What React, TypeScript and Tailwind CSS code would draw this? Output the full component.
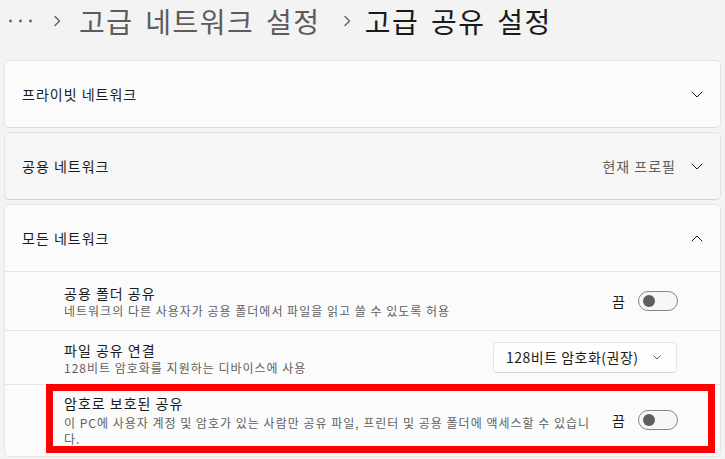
import React from "react";

const font = { fontFamily: '"Noto Sans CJK KR", "Noto Sans", sans-serif' };

function ChevronDown({ className = "" }: { className?: string }) {
  return (
    <svg width="12" height="7" viewBox="0 0 12 7" className={className} fill="none">
      <path d="M1 1l5 5 5-5" stroke="#1b1b1b" strokeWidth="1" strokeLinecap="round" strokeLinejoin="round" />
    </svg>
  );
}
function ChevronUp() {
  return (
    <svg width="12" height="7" viewBox="0 0 12 7" fill="none">
      <path d="M1 6l5-5 5 5" stroke="#1b1b1b" strokeWidth="1" strokeLinecap="round" strokeLinejoin="round" />
    </svg>
  );
}
function BreadChevron() {
  return (
    <svg width="8" height="12" viewBox="0 0 8 12" fill="none">
      <path d="M2 1.5l4.5 4.5L2 10.5" stroke="#5f5f5f" strokeWidth="1.4" strokeLinecap="round" strokeLinejoin="round" />
    </svg>
  );
}

function Toggle() {
  return (
    <div className="w-[40px] h-[20px] rounded-full border border-[#858585] bg-[#f6f6f6] flex items-center pl-[4px]">
      <div className="w-[12px] h-[12px] rounded-full bg-[#5d5d5d]" />
    </div>
  );
}

export default function App() {
  return (
    <div className="relative w-[725px] h-[459px] overflow-hidden bg-[#f3f3f3] text-[#1b1b1b]" style={font}>
      {/* Breadcrumb */}
      <div className="h-[42px] flex items-center pl-[9px]">
        <svg width="24" height="4" viewBox="0 0 24 4" className="mr-[20px]">
          <circle cx="1.5" cy="2" r="1.4" fill="#5f5f5f" />
          <circle cx="11.5" cy="2" r="1.4" fill="#5f5f5f" />
          <circle cx="21.5" cy="2" r="1.4" fill="#5f5f5f" />
        </svg>
        <BreadChevron />
        <span className="ml-[18px] text-[28px] leading-[36px] tracking-[1.5px] text-[#5c5c5c] [word-spacing:4px]">고급 네트워크 설정</span>
        <span className="ml-[22px]"><BreadChevron /></span>
        <span className="ml-[14px] text-[28px] leading-[36px] tracking-[1.5px] text-[#1a1a1a] [word-spacing:4px]">고급 공유 설정</span>
      </div>

      <div className="mt-[18px] ml-[4px] w-[717px] flex flex-col gap-[4px]">
        {/* Card 1 */}
        <div className="h-[68px] rounded-[5px] border border-[#e5e5e5] border-b-[#dcdcdc] bg-[#fbfbfb] flex items-center pl-[17px] pr-[17px]">
          <span className="text-[14px] tracking-[1px] flex-1">프라이빗 네트워크</span>
          <ChevronDown />
        </div>
        {/* Card 2 */}
        <div className="h-[68px] rounded-[5px] border border-[#e3e3e3] border-b-[#d3d3d3] bg-[#f6f6f6] flex items-center pl-[17px] pr-[17px]">
          <span className="text-[14px] tracking-[1px] flex-1">공용 네트워크</span>
          <span className="text-[14px] tracking-[1px] text-[#5f5f5f] mr-[15px]">현재 프로필</span>
          <ChevronDown />
        </div>
        {/* Card 3 */}
        <div className="rounded-[5px] border border-[#e5e5e5] bg-[#fbfbfb] flex flex-col">
          <div className="h-[66px] flex items-center pl-[17px] pr-[17px]">
            <span className="text-[14px] tracking-[1px] flex-1">모든 네트워크</span>
            <ChevronUp />
          </div>
          {/* Row 1 */}
          <div className="h-[59px] border-t border-[#e5e5e5] flex items-center pl-[59px] pr-[42px]">
            <div className="flex-1 flex flex-col">
              <span className="text-[14px] leading-[20px] tracking-[1px]">공용 폴더 공유</span>
              <span className="text-[12px] leading-[16px] tracking-[1px] text-[#5f5f5f]">네트워크의 다른 사용자가 공용 폴더에서 파일을 읽고 쓸 수 있도록 허용</span>
            </div>
            <span className="text-[14px] mr-[13px]">끔</span>
            <Toggle />
          </div>
          {/* Row 2 */}
          <div className="h-[54px] border-t border-[#e5e5e5] flex items-center pl-[59px] pr-[43px]">
            <div className="flex-1 flex flex-col">
              <span className="text-[14px] leading-[20px] tracking-[1px]">파일 공유 연결</span>
              <span className="text-[12px] leading-[16px] tracking-[1px] text-[#5f5f5f]">128비트 암호화를 지원하는 디바이스에 사용</span>
            </div>
            <div className="w-[184px] h-[31px] rounded-[4px] border border-[#e5e5e5] border-b-[#d6d6d6] bg-[#fefefe] flex items-center pl-[12px] pr-[15px]">
              <span className="text-[14px] tracking-[0.5px] flex-1">128비트 암호화(권장)</span>
              <svg width="8" height="5" viewBox="0 0 8 5" fill="none">
                <path d="M0.8 0.8L4 4l3.2-3.2" stroke="#5f5f5f" strokeWidth="1" strokeLinecap="round" strokeLinejoin="round" />
              </svg>
            </div>
          </div>
          {/* Row 3 */}
          <div className="border-t border-[#e5e5e5] flex items-center pl-[59px] pr-[42px] pt-[8px] pb-[9px]">
            <div className="flex-1 flex flex-col">
              <span className="text-[14px] leading-[20px] tracking-[1px]">암호로 보호된 공유</span>
              <span className="mt-[2px] text-[12px] leading-[16px] tracking-[1px] text-[#5f5f5f] whitespace-nowrap">
                이 PC에 사용자 계정 및 암호가 있는 사람만 공유 파일, 프린터 및 공용 폴더에 액세스할 수 있습니
                <br />
                다.
              </span>
            </div>
            <span className="text-[14px] mr-[13px]">끔</span>
            <Toggle />
          </div>
        </div>
      </div>

      {/* Red annotation box */}
      <div className="absolute left-[46px] top-[384px] w-[669px] h-[69px] border-[7px] border-[#ff0000]" />
    </div>
  );
}
